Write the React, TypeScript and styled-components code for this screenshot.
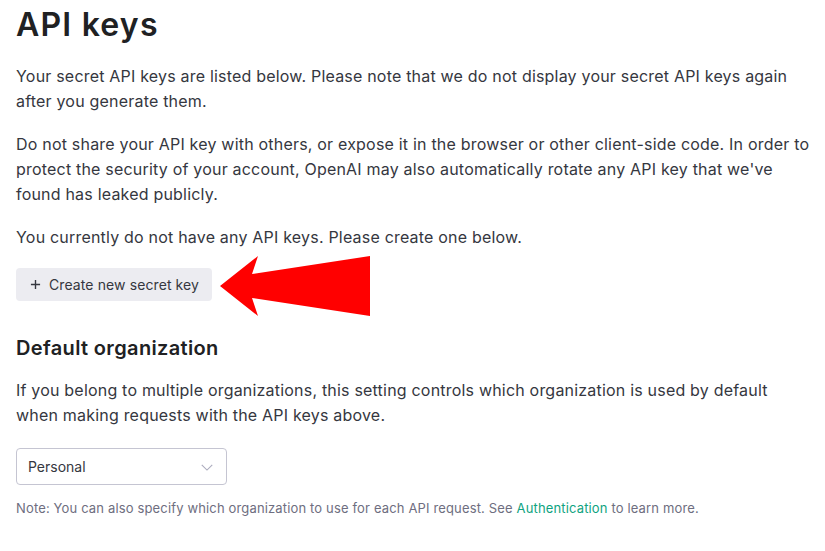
import styled, { createGlobalStyle } from "styled-components";

const GlobalStyle = createGlobalStyle`
  body {
    margin: 0;
    background: #ffffff;
    font-family: Inter, "Noto Sans", "Liberation Sans", sans-serif;
    color: #353740;
  }
`;

export default function App() {
  return (
    <>
      <GlobalStyle />
      <Page>
        <Title>API keys</Title>
        <Text>
          Your secret API keys are listed below. Please note that we do not
          display your secret API keys again
          <br />
          after you generate them.
        </Text>
        <Text>
          Do not share your API key with others, or expose it in the browser or
          other client-side code. In order to
          <br />
          protect the security of your account, OpenAI may also automatically
          rotate any API key that we've
          <br />
          found has leaked publicly.
        </Text>
        <Text>You currently do not have any API keys. Please create one below.</Text>

        <ButtonRow>
          <CreateButton>
            <PlusIcon viewBox="0 0 12 12">
              <path d="M6 1v10M1 6h10" />
            </PlusIcon>
            Create new secret key
          </CreateButton>
          {/* 빨간 화살표 - 버튼 위에 겹쳐서 */}
          <Arrow viewBox="0 0 152 62">
            <polygon points="0,30 38,0 32,18 150,0 150,60 32,42 38,60" />
          </Arrow>
        </ButtonRow>

        <SubTitle>Default organization</SubTitle>
        <Text>
          If you belong to multiple organizations, this setting controls which
          organization is used by default
          <br />
          when making requests with the API keys above.
        </Text>

        <Select>
          <span>Personal</span>
          <Chevron viewBox="0 0 16 16">
            <path d="M2 5.5l6 6 6-6" />
          </Chevron>
        </Select>

        <Note>
          Note: You can also specify which organization to use for each API
          request. See <Link>Authentication</Link> to learn more.
        </Note>
      </Page>
    </>
  );
}

const Page = styled.div`
  display: flex;
  flex-direction: column;
  align-items: flex-start;
  padding: 5px 0 0 16px;
`;

const Title = styled.h1`
  margin: 0 0 19px 0;
  font-size: 32px;
  line-height: 40px;
  font-weight: 600;
  color: #202123;
  letter-spacing: 1.2px;
`;

const Text = styled.p`
  margin: 0 0 18px 0;
  font-size: 16px;
  line-height: 25px;
  letter-spacing: 0.2px;
  white-space: nowrap;
  color: #353740;
`;

const ButtonRow = styled.div`
  position: relative;
  margin-bottom: 33px;
`;

const CreateButton = styled.button`
  display: flex;
  align-items: center;
  gap: 8px;
  height: 33px;
  padding: 0 13px 0 14px;
  border: none;
  border-radius: 4px;
  background: #ececf1;
  color: #353740;
  font-family: inherit;
  font-size: 14px;
  letter-spacing: 0.1px;
  white-space: nowrap;
  cursor: pointer;
`;

const PlusIcon = styled.svg`
  width: 11px;
  height: 11px;
  fill: none;
  stroke: #353740;
  stroke-width: 1.5;
`;

const Arrow = styled.svg`
  position: absolute;
  left: 204px;
  top: -12px;
  width: 152px;
  height: 62px;
  fill: #ff0000;
`;

const SubTitle = styled.h2`
  margin: 0 0 16px 0;
  font-size: 20px;
  line-height: 28px;
  font-weight: 600;
  letter-spacing: 0.35px;
  color: #202123;
`;

const Select = styled.div`
  display: flex;
  align-items: center;
  justify-content: space-between;
  box-sizing: border-box;
  width: 211px;
  height: 37px;
  padding: 0 12px 0 11px;
  margin-top: 2px;
  border: 1px solid #c5c5d2;
  border-radius: 4px;
  font-size: 14px;
  color: #353740;
`;

const Chevron = styled.svg`
  width: 14px;
  height: 14px;
  fill: none;
  stroke: #acacbe;
  stroke-width: 1.3;
`;

const Note = styled.p`
  margin: 13px 0 0 0;
  font-size: 13px;
  line-height: 20px;
  letter-spacing: 0.15px;
  color: #6e6e80;
`;

const Link = styled.a`
  color: #10a37f;
  text-decoration: none;
`;
